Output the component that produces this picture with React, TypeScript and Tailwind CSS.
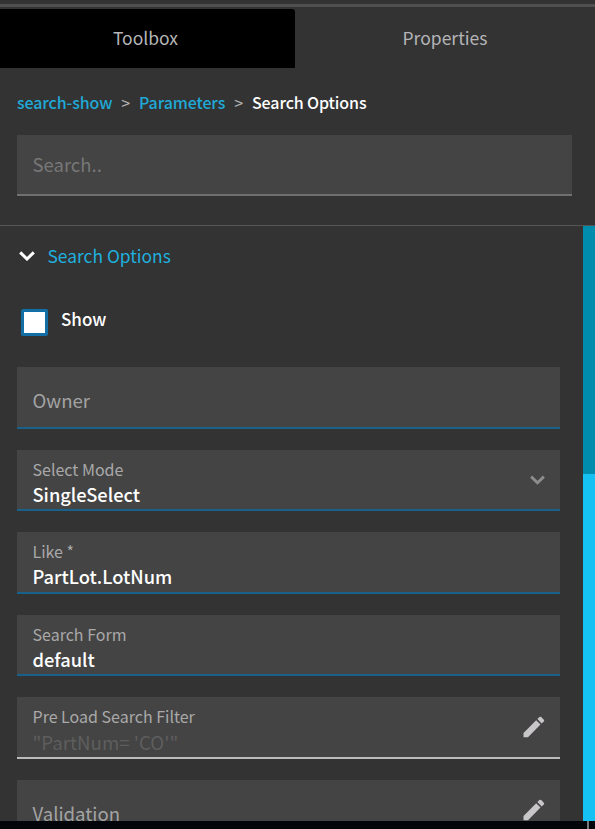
import type { ReactNode } from 'react'

function Chevron({ className }: { className?: string }) {
  return (
    <svg viewBox="0 0 16 10" className={className} fill="none" stroke="currentColor" strokeWidth="3">
      <path d="M1.2 1.4 8 8 14.8 1.4" />
    </svg>
  )
}

function Pencil() {
  return (
    <svg viewBox="0 0 22 22" className="w-[22px] h-[22px] text-[#c8c6c8]" fill="currentColor">
      <path d="M.5 17 13.2 4.300 17.500 8.600 5 21.300H.5z" />
      <path d="M14.400 3.100 16.400 1.100Q17.300.2 18.200 1.100L20.800 3.700Q21.700 4.600 20.800 5.500L18.700 7.500z" />
    </svg>
  )
}

type FieldProps = {
  label: string
  value?: string
  placeholder?: string
  border?: string
  icon?: ReactNode
}

function Field({ label, value, placeholder, border = 'border-[#17618a]', icon }: FieldProps) {
  const filled = value || placeholder
  return (
    <div className={`flex shrink-0 justify-between h-[61.5px] bg-[#444] border-b-2 pl-[15.5px] pr-[15px] ${border}`}>
      {filled ? (
        <div className="flex flex-col pt-[7px]">
          <span className="text-[16px] leading-[24px] text-[#a9a9a9]">{label}</span>
          {value && <span className="text-[18.3px] leading-[28px] -mt-px font-medium text-white">{value}</span>}
          {placeholder && <span className="text-[18.7px] leading-[28px] text-[#5e5e5e]">{placeholder}</span>}
        </div>
      ) : (
        <span className="pt-[19px] text-[18.6px] leading-[28px] text-[#a3a3a3]">{label}</span>
      )}
      {icon}
    </div>
  )
}

function PencilSlot() {
  return <div className="pt-[19px]"><Pencil /></div>
}

export default function App() {
  return (
    <div className="flex flex-col w-full h-[829px] overflow-hidden bg-[#333] font-['Noto_Sans_CJK_SC','Noto_Sans',sans-serif] text-white">
      <div className="shrink-0 mt-1 h-[3px] bg-[#505050]" />

      <div className="flex shrink-0 h-[60px] mt-[2px] text-[17.5px] leading-[57px] text-center text-[#b5b5b8]">
        <div className="w-[295px] pr-[4px] h-[59px] bg-black rounded-tr-[3px]">Toolbox</div>
        <div className="flex-1">Properties</div>
      </div>

      <div className="flex shrink-0 items-center gap-[9px] h-[28px] mt-[19px] pl-[17px] text-[16px] tracking-[-0.12px] leading-[28px] whitespace-nowrap">
        <span className="font-medium text-[#1fa9d6]">search-show</span>
        <span className="text-[#b0b0b0]">&gt;</span>
        <span className="font-medium text-[#1fa9d6]">Parameters</span>
        <span className="text-[#b0b0b0]">&gt;</span>
        <span className="font-medium">Search Options</span>
      </div>

      <div className="shrink-0 mt-[19px] ml-[17px] w-[555px] h-[61px] bg-[#444] border-b-2 border-[#707070] pl-[15.5px] text-[18.5px] leading-[58px] text-[#777]">
        Search..
      </div>

      <div className="shrink-0 mt-[29px] h-px bg-[#555]" />

      <div className="flex h-[595px] overflow-hidden">
        <div className="flex-1 overflow-hidden pl-[17px] pr-[23px]">
          <div className="flex items-center h-[28px] mt-[16px] pl-[2px]">
            <Chevron className="w-4 h-[10px]" />
            <span className="ml-[12.5px] text-[17.4px] leading-[28px] text-[#1fb0df]">Search Options</span>
          </div>

          <div className="flex mt-[35px] pl-[3.5px]">
            <div className="w-[27px] h-[27px] mt-[3.5px] bg-white border-[3px] border-[#126fa5] rounded-[2px]" />
            <span className="ml-[13.5px] text-[17px] leading-[28px] font-medium">Show</span>
          </div>

          <div className="flex flex-col gap-[21px] mt-[31.5px]">
            <Field label="Owner" />
            <Field
              label="Select Mode"
              value="SingleSelect"
              icon={<Chevron className="w-[15px] h-[10px] mt-[25px] text-[#8d8d8d]" />}
            />
            <Field label="Like *" value="PartLot.LotNum" />
            <Field label="Search Form" value="default" />
            <Field label="Pre Load Search Filter" placeholder={`"PartNum= 'CO'"`} border="border-[#bcbcbc]" icon={<PencilSlot />} />
            <Field label="Validation" icon={<PencilSlot />} />
          </div>
        </div>

        <div className="w-3 bg-[#15c0f3]">
          <div className="h-[248px] bg-[#008cac]" />
        </div>
      </div>

      <div className="flex justify-end h-[8px] bg-[#02060b]">
        <div className="w-[2px] mr-[6px] bg-[#77797b]" />
      </div>
    </div>
  )
}
